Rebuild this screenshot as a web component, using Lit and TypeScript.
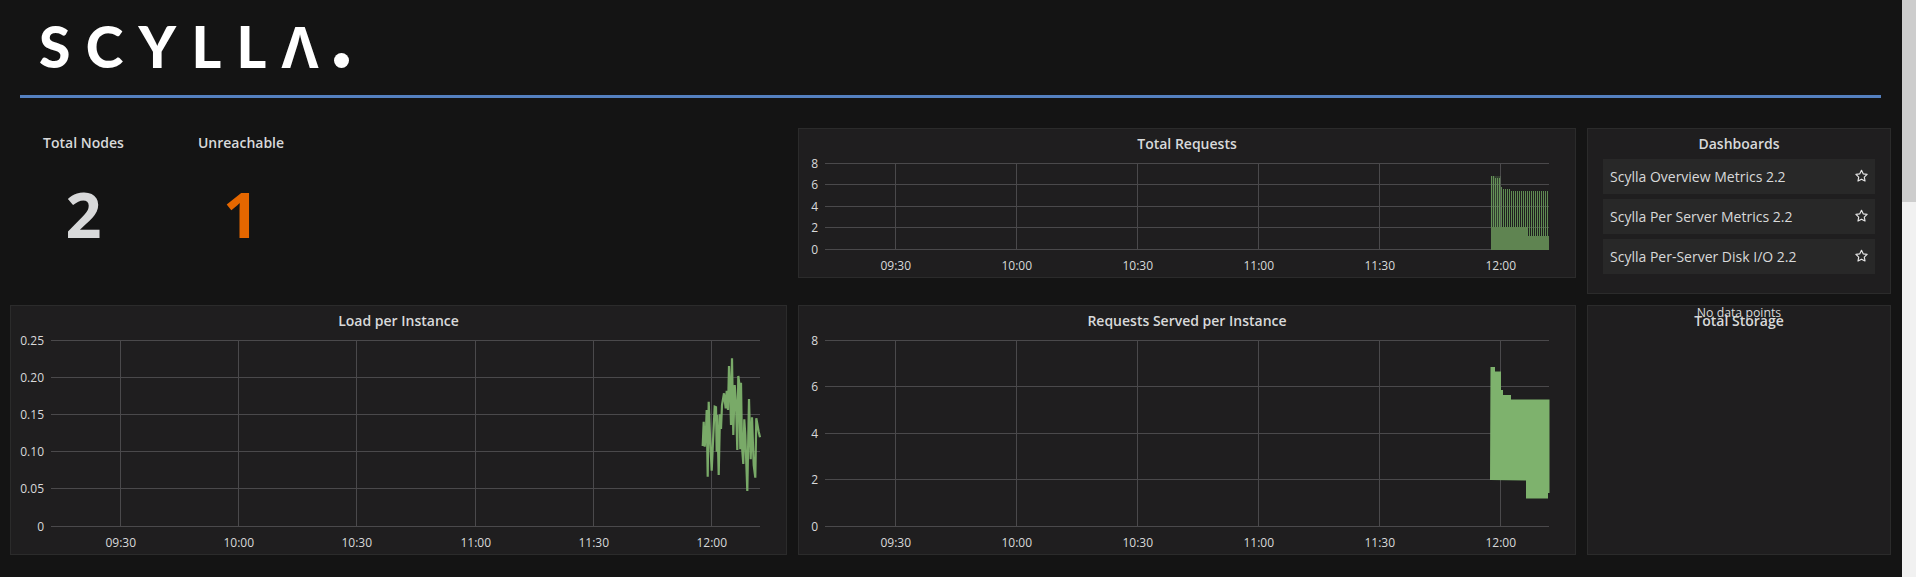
import { LitElement, html, css, svg } from "lit";
import { customElement, property } from "lit/decorators.js";

type Pt = [number, number];

const TIMES = ["09:30", "10:00", "10:30", "11:00", "11:30", "12:00"];

const LOAD_RAW: Pt[] = [[128,378],[131,305],[134,380],[138,330],[140,270],[143,470],[146,245],[150,350],[155,452],[160,345],[164,260],[168,262],[170,395],[172,285],[176,465],[180,283],[183,327],[186,255],[192,220],[197,265],[200,212],[204,270],[207,138],[210,200],[213,315],[216,115],[220,345],[224,195],[228,250],[232,390],[235,168],[238,190],[241,388],[243,188],[246,380],[250,432],[253,298],[256,345],[262,513],[267,237],[272,418],[276,292],[281,435],[286,473],[289,295],[296,335],[300,352]];

interface ChartCfg {
  height: number;
  width: number;
  left: number;
  right: number;
  yTicks: [string, number][];
  xTicks: number[];
  axisLabelY: number;
}

@customElement("graph-plot")
class GraphPlot extends LitElement {
  @property({ attribute: false }) cfg!: ChartCfg;
  @property({ attribute: false }) series: unknown = null;

  static styles = css`
    :host { display: block; }
    svg { display: block; overflow: visible; }
    .grid { stroke: #4a494b; stroke-width: 1; shape-rendering: crispEdges; }
    text { font-family: "Open Sans", sans-serif; font-size: 12px; fill: #d8d9da; }
    .yl { text-anchor: end; dominant-baseline: central; }
    .xl { text-anchor: middle; dominant-baseline: central; }
  `;

  render() {
    const c = this.cfg;
    const top = c.yTicks[0][1];
    const bottom = c.yTicks[c.yTicks.length - 1][1];
    return html`<svg width=${c.width} height=${c.height} viewBox="0 0 ${c.width} ${c.height}">
      ${c.yTicks.map(([label, y]) => svg`
        <line class="grid" x1=${c.left} x2=${c.right} y1=${y} y2=${y}></line>
        <text class="yl" x=${c.left - 7} y=${y}>${label}</text>`)}
      ${c.xTicks.map((x, i) => svg`
        <line class="grid" x1=${x} x2=${x} y1=${top} y2=${bottom}></line>
        <text class="xl" x=${x + 0.8} y=${c.axisLabelY}>${TIMES[i]}</text>`)}
      ${this.series}
    </svg>`;
  }
}

const seq = (start: number, step: number) => TIMES.map((_, i) => Math.round(start + i * step));

/* coordinates inside a panel's svg: panel left edge + 1 border = svg x 0; svg top = panel top + 31 */
const loadCfg: ChartCfg = {
  width: 775, height: 216, left: 40, right: 749,
  yTicks: [["0.25", 4], ["0.20", 41], ["0.15", 78], ["0.10", 115], ["0.05", 152], ["0", 190]],
  xTicks: seq(109, 118.2), axisLabelY: 206,
};
const servedCfg: ChartCfg = {
  width: 776, height: 216, left: 26, right: 750,
  yTicks: [["8", 4], ["6", 50], ["4", 97], ["2", 143], ["0", 190]],
  xTicks: seq(96, 121), axisLabelY: 206,
};
const totalCfg: ChartCfg = {
  width: 776, height: 116, left: 26, right: 750,
  yTicks: [["8", 4], ["6", 25], ["4", 47], ["2", 68], ["0", 90]],
  xTicks: seq(96, 121), axisLabelY: 106,
};

/* series are traced in page coordinates and shifted to the svg origin */
const loadSeries = () => {
  const pts = LOAD_RAW.map(([x, y]) => `${(660 + x / 3 - 11).toFixed(1)},${(320 + y / 3 - 336).toFixed(1)}`).join(" ");
  return svg`<polyline points=${pts} fill="none" stroke="#7eb26d" stroke-width="2.2" stroke-linejoin="miter" stroke-opacity=".95"></polyline>`;
};

const servedSeries = () => {
  const page: Pt[] = [[1490.5,367],[1495,367],[1495,371.5],[1501,371.5],[1501,390],[1503,390],[1503,395],[1511,395],[1511,399.5],[1549.5,399.5],[1549.5,493],[1548,493],[1548,498.5],[1526,498.5],[1526,480.5],[1490,480]];
  const pts = page.map(([x, y]) => `${x - 799},${y - 336}`).join(" ");
  return svg`<polygon points=${pts} fill="#7eb26d"></polygon>`;
};

const totalSeries = () => {
  const ox = 799, oy = 159;
  const topAt = (x: number) => x < 1495 ? 176 : x < 1501 ? 178 : x < 1503 ? 187 : x < 1511 ? 189 : 191;
  const bars: unknown[] = [];
  for (let x = 1491; x < 1549; x += 2) {
    bars.push(svg`<rect x=${x - ox} y=${topAt(x) - oy} width="1" height=${249 - topAt(x)} fill="#5f8a52" shape-rendering="crispEdges"></rect>`);
  }
  const solid: Pt[] = [[1491,227],[1527,227],[1527,236],[1549,236],[1549,249.5],[1491,249.5]];
  return svg`${bars}<polygon points=${solid.map(([x, y]) => `${x - ox},${y - oy}`).join(" ")} fill="#5f8451" shape-rendering="crispEdges"></polygon>
  <rect x=${1491 - ox} y=${176 - oy} width="10" height="51" fill="#7eb26d" fill-opacity=".2"></rect>`;
};

const STAR = svg`<path d="M6.5 1.3 8.2 4.8 12.1 5.4 9.3 8.1 10 12 6.5 10.2 3 12 3.7 8.1.9 5.4 4.8 4.8Z" fill="none" stroke="#e4e4e4" stroke-width="1.2" stroke-linejoin="round"></path>`;

const DASHBOARDS = ["Scylla Overview Metrics 2.2", "Scylla Per Server Metrics 2.2", "Scylla Per-Server Disk I/O 2.2"];

@customElement("app-root")
export class AppRoot extends LitElement {
  static styles = css`
    :host {
      display: flex;
      height: 577px;
      overflow: hidden;
      background: #141414;
      font-family: "Open Sans", sans-serif;
      color: #d8d9da;
    }
    .main { flex: 1; min-width: 0; }
    .scrollbar { width: 14px; background: #f1f1f1; }
    .thumb { height: 202px; background: #cdcdcd; }

    .logo {
      display: flex;
      align-items: center;
      height: 95px;
      margin: 0 21px 0 20px;
      padding-left: 19px;
      box-sizing: border-box;
    }
    .logo-text {
      font-family: Lato, sans-serif;
      font-weight: 900;
      font-size: 57px;
      line-height: 1;
      letter-spacing: 15.3px;
      color: #fff;
      margin-top: -3px;
    }
    .lambda { font-family: "Open Sans", sans-serif; font-weight: 700; }
    .logo-dot {
      width: 15px;
      height: 15px;
      border-radius: 50%;
      background: #fff;
      margin: 25px 0 0 0;
    }
    .rule { height: 3px; background: #5480c0; margin: 0 21px 0 20px; }

    .grid {
      display: grid;
      grid-template-columns: 777px 778px 304px;
      grid-template-rows: 166px 250px;
      column-gap: 11px;
      row-gap: 11px;
      padding: 30px 0 0 10px;
    }
    .panel {
      position: relative;
      box-sizing: border-box;
      background: #1f1e1f;
      border: 1px solid #2b2b2b;
    }
    .title {
      font-size: 14px;
      font-weight: 600;
      line-height: 19px;
      text-align: center;
      padding-top: 5px;
      height: 30px;
      box-sizing: border-box;
    }
    .h150 { height: 150px; }
    .stats { display: flex; padding-top: 5px; }
    .stat { text-align: center; }
    .stat.a { width: 147px; }
    .stat.b { width: 168px; }
    .stat-title { font-size: 14px; font-weight: 600; line-height: 19px; }
    .stat-value { font-size: 63px; font-weight: 700; line-height: 86px; margin-top: 19px; }
    .orange { color: #e56700; }

    .dash-list { display: flex; flex-direction: column; gap: 5px; padding: 0 15px; }
    .dash-row {
      display: flex;
      align-items: center;
      justify-content: space-between;
      height: 35px;
      padding: 0 7px;
      background: #282828;
      font-size: 14px;
    }
    .dash-row svg { display: block; margin-top: -2px; }
    .nodata {
      position: absolute;
      left: 0;
      right: 0;
      top: -1px;
      text-align: center;
      font-size: 12.3px;
      line-height: 16px;
    }
  `;

  render() {
    return html`
      <div class="main">
        <div class="logo">
          <span class="logo-text">SCYLL<span class="lambda">Λ</span></span>
          <span class="logo-dot"></span>
        </div>
        <div class="rule"></div>
        <div class="grid">
          <div class="stats">
            <div class="stat a">
              <div class="stat-title">Total Nodes</div>
              <div class="stat-value">2</div>
            </div>
            <div class="stat b">
              <div class="stat-title">Unreachable</div>
              <div class="stat-value orange">1</div>
            </div>
          </div>
          <div class="panel h150">
            <div class="title">Total Requests</div>
            <graph-plot .cfg=${totalCfg} .series=${totalSeries()}></graph-plot>
          </div>
          <div class="panel">
            <div class="title">Dashboards</div>
            <div class="dash-list">
              ${DASHBOARDS.map(d => html`<div class="dash-row"><span>${d}</span>
                <svg width="13" height="13" viewBox="0 0 13 13">${STAR}</svg></div>`)}
            </div>
          </div>
          <div class="panel">
            <div class="title">Load per Instance</div>
            <graph-plot .cfg=${loadCfg} .series=${loadSeries()}></graph-plot>
          </div>
          <div class="panel">
            <div class="title">Requests Served per Instance</div>
            <graph-plot .cfg=${servedCfg} .series=${servedSeries()}></graph-plot>
          </div>
          <div class="panel">
            <div class="nodata">No data points</div>
            <div class="title">Total Storage</div>
          </div>
        </div>
      </div>
      <div class="scrollbar"><div class="thumb"></div></div>
    `;
  }
}
